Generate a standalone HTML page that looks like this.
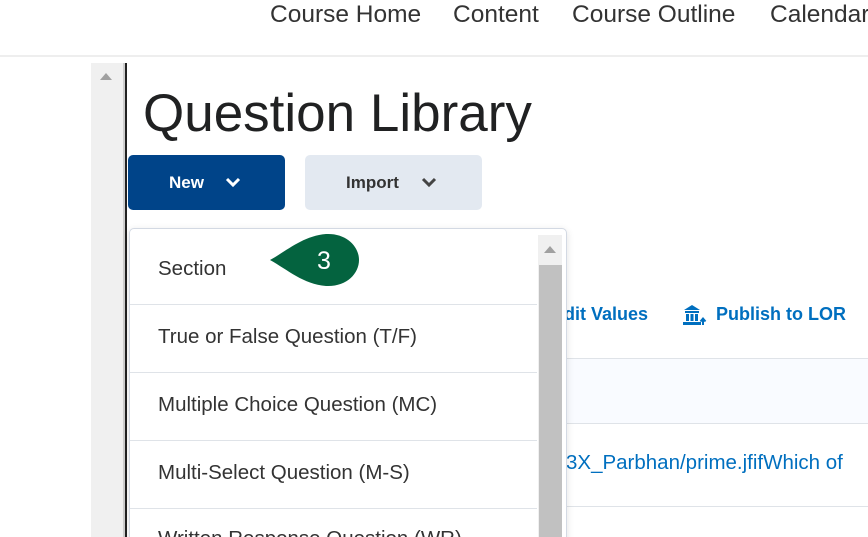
<!DOCTYPE html>
<html><head><style>
html,body{margin:0;width:868px;height:537px;overflow:hidden}
body{background:#fff;font-family:"Liberation Sans",sans-serif;position:relative}
.a{position:absolute}
.nav{top:0;left:0;width:868px;height:55px;border-bottom:2px solid #eeeeee;background:#fff}
.nav span{position:absolute;top:0;font-size:24.5px;color:#333;line-height:30px;white-space:nowrap}
.row{position:absolute;left:158px;font-size:20.5px;color:#333;white-space:nowrap}
.sep{position:absolute;left:130px;width:407px;height:1px;background:#dfe3e8}
</style></head><body>
<div class="a nav">
<span style="left:270px">Course Home</span>
<span style="left:453px">Content</span>
<span style="left:572px">Course Outline</span>
<span style="left:770px">Calendar</span>
</div>
<div class="a" style="left:91px;top:63px;width:32px;height:474px;background:#f0f0f0"></div>
<div class="a" style="left:100px;top:73px;width:0;height:0;border-left:6px solid transparent;border-right:6px solid transparent;border-bottom:7px solid #a0a0a0"></div>
<div class="a" style="left:123px;top:63px;width:2px;height:474px;background:#cfcfcf"></div>
<div class="a" style="left:125px;top:63px;width:2px;height:474px;background:#222"></div>
<div class="a" style="left:143px;top:82px;font-size:53px;color:#202122;line-height:64px;white-space:nowrap">Question Library</div>
<div class="a" style="left:128px;top:155px;width:157px;height:55px;background:#004489;border-radius:5px;color:#fff;font-weight:bold;font-size:17px;line-height:55px"><span style="position:absolute;left:41px">New</span>
<svg class="a" style="left:96px;top:21px" width="18" height="14" viewBox="0 0 18 14"><path d="M3 3l6 6 6-6" stroke="#fff" stroke-width="3" fill="none"/></svg></div>
<div class="a" style="left:305px;top:155px;width:177px;height:55px;background:#e3e9f1;border-radius:5px;color:#333;font-weight:bold;font-size:17px;line-height:55px"><span style="position:absolute;left:41px">Import</span>
<svg class="a" style="left:115px;top:21px" width="18" height="14" viewBox="0 0 18 14"><path d="M3 3l6 6 6-6" stroke="#444" stroke-width="3" fill="none"/></svg></div>
<div class="a" style="left:564px;top:304px;font-size:18px;font-weight:bold;color:#006fbf">dit Values</div>
<svg class="a" style="left:682px;top:303px" width="26" height="24" viewBox="0 0 26 24"><path d="M2 7L10 2 18 7Z M3 8h14v2H3z M4 11h3v7H4z M8.5 11h3v7h-3z M13 11h3v7h-3z M1 19h18v3H1z" fill="#006fbf"/><path d="M21 22v-6 M18.5 18.5l2.5-3 2.5 3" stroke="#006fbf" stroke-width="2" fill="none"/></svg>
<div class="a" style="left:716px;top:304px;font-size:18px;font-weight:bold;color:#006fbf">Publish to LOR</div>
<div class="a" style="left:566px;top:358px;width:302px;height:64px;background:#f9fbff;border-top:1px solid #dfe3e8;border-bottom:1px solid #dfe3e8"></div>
<div class="a" style="left:566px;top:451px;font-size:20.5px;color:#006fbf;white-space:nowrap">3X_Parbhan/prime.jfifWhich of</div>
<div class="a" style="left:566px;top:506px;width:302px;height:1px;background:#dfe3e8"></div>
<div class="a" style="left:129px;top:228px;width:436px;height:320px;background:#fff;border:1px solid #d3d9e3;border-radius:5px;box-shadow:0 2px 8px rgba(0,0,0,.12)"></div>
<div class="row" style="top:257px">Section</div>
<div class="sep" style="top:304px"></div>
<div class="row" style="top:325px">True or False Question (T/F)</div>
<div class="sep" style="top:372px"></div>
<div class="row" style="top:393px">Multiple Choice Question (MC)</div>
<div class="sep" style="top:440px"></div>
<div class="row" style="top:461px">Multi-Select Question (M-S)</div>
<div class="sep" style="top:508px"></div>
<div class="row" style="top:527px">Written Response Question (WR)</div>
<div class="a" style="left:538px;top:235px;width:24px;height:302px;background:#f0f0f0"></div>
<div class="a" style="left:544px;top:246px;width:0;height:0;border-left:6px solid transparent;border-right:6px solid transparent;border-bottom:7px solid #a0a0a0"></div>
<div class="a" style="left:539px;top:265px;width:23px;height:272px;background:#c1c1c1"></div>
<svg class="a" style="left:268px;top:232px" width="94" height="56" viewBox="0 0 94 56"><path d="M2 28C20 18 35 4 58 2 78 1 91 14 91 28 91 42 78 55 58 54 35 52 20 38 2 28Z" fill="#04633f"/><text x="56" y="37" font-family="Liberation Sans" font-size="25" fill="#fff" text-anchor="middle">3</text></svg>
</body></html>
